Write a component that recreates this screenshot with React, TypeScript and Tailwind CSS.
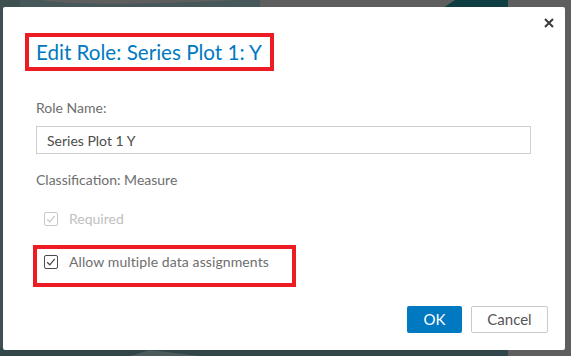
import React from "react";

// Small check box used in the dialog; disabled boxes are greyed out
function CheckBox({ checked, disabled }: { checked: boolean; disabled?: boolean }) {
  const color = disabled ? "#c8c8c8" : "#4a4a4a";
  return (
    <svg width="14" height="14" viewBox="0 0 14 14" className="shrink-0">
      <rect x="0.5" y="0.5" width="13" height="13" rx="1.5" fill="white" stroke={color} />
      {checked && (
        <path d="M3.2 7.2 L5.8 9.8 L10.8 3.8" fill="none" stroke={color} strokeWidth="1.3" />
      )}
    </svg>
  );
}

export default function App() {
  return (
    <div
      className="relative w-[571px] h-[356px] overflow-hidden bg-[#5e5e5e]"
      style={{ fontFamily: "Lato, 'Open Sans', sans-serif" }}
    >
      {/* map showing through behind the modal */}
      <svg className="absolute inset-0" width="571" height="356" viewBox="0 0 571 356">
        <path d="M0 0 H40 C80 6 150 4 240 0 H260 V10 H0 Z" fill="#465859" />
        <path d="M0 0 V356 H20 V0 Z" fill="#3e5052" />
        <path d="M455 0 H508 V10 H440 Z" fill="#0f3e42" />
        <path d="M0 348 H508 V356 H0 Z" fill="#304649" />
        <path d="M150 350 C170 352 180 354 200 356 H130 Z" fill="#4c5c5c" />
      </svg>

      <div className="relative pt-[7px] pl-[3px]">
        <div className="relative w-[562px] h-[343px] bg-white rounded-[2px]">
          <button className="absolute right-[10px] top-[10px] w-[12px] h-[12px] flex items-center justify-center">
            <svg width="10" height="10" viewBox="0 0 10 10">
              <path d="M1 1 L9 9 M9 1 L1 9" stroke="#3a3a3a" strokeWidth="2" />
            </svg>
          </button>

          <div className="px-[33px] pt-[31px]">
            <h2 className="text-[20.6px] leading-[28px] text-[#0079c1]">
              Edit Role: Series Plot 1: Y
            </h2>

            <div className="mt-[32px] text-[14px] leading-[20px] text-[#6e6e6e]">Role Name:</div>
            <div className="mt-[8px] w-[495px] h-[28px] border border-[#cfcfcf] flex items-center px-[10px] text-[14px] text-[#4c4c4c]">
              Series Plot 1 Y
            </div>

            <div className="mt-[16px] text-[14px] leading-[20px] text-[#6e6e6e]">
              Classification: Measure
            </div>

            <div className="mt-[19px] pl-[8px] flex items-center gap-[11px] text-[14px] leading-[20px] text-[#c0c0c0]">
              <CheckBox checked disabled />
              <span>Required</span>
            </div>

            <div className="mt-[23px] pl-[8px] flex items-center gap-[11px] text-[14px] leading-[20px] text-[#6e6e6e]">
              <CheckBox checked />
              <span className="tracking-[0.1px]">Allow multiple data assignments</span>
            </div>
          </div>

          <div className="mt-[34px] pr-[17px] flex justify-end gap-[9px]">
            <button className="w-[55px] h-[27px] bg-[#0079c1] text-white text-[15px] rounded-[2px]">
              OK
            </button>
            <button className="w-[77px] h-[27px] border border-[#cacaca] text-[#555555] text-[15px] rounded-[2px]">
              Cancel
            </button>
          </div>

          {/* red annotation frames */}
          <div className="absolute left-[22px] top-[26px] w-[249px] h-[38px] border-[4px] border-[#ed1c24]" />
          <div className="absolute left-[30px] top-[238px] w-[263px] h-[42px] border-[4px] border-[#ed1c24]" />
        </div>
      </div>
    </div>
  );
}
